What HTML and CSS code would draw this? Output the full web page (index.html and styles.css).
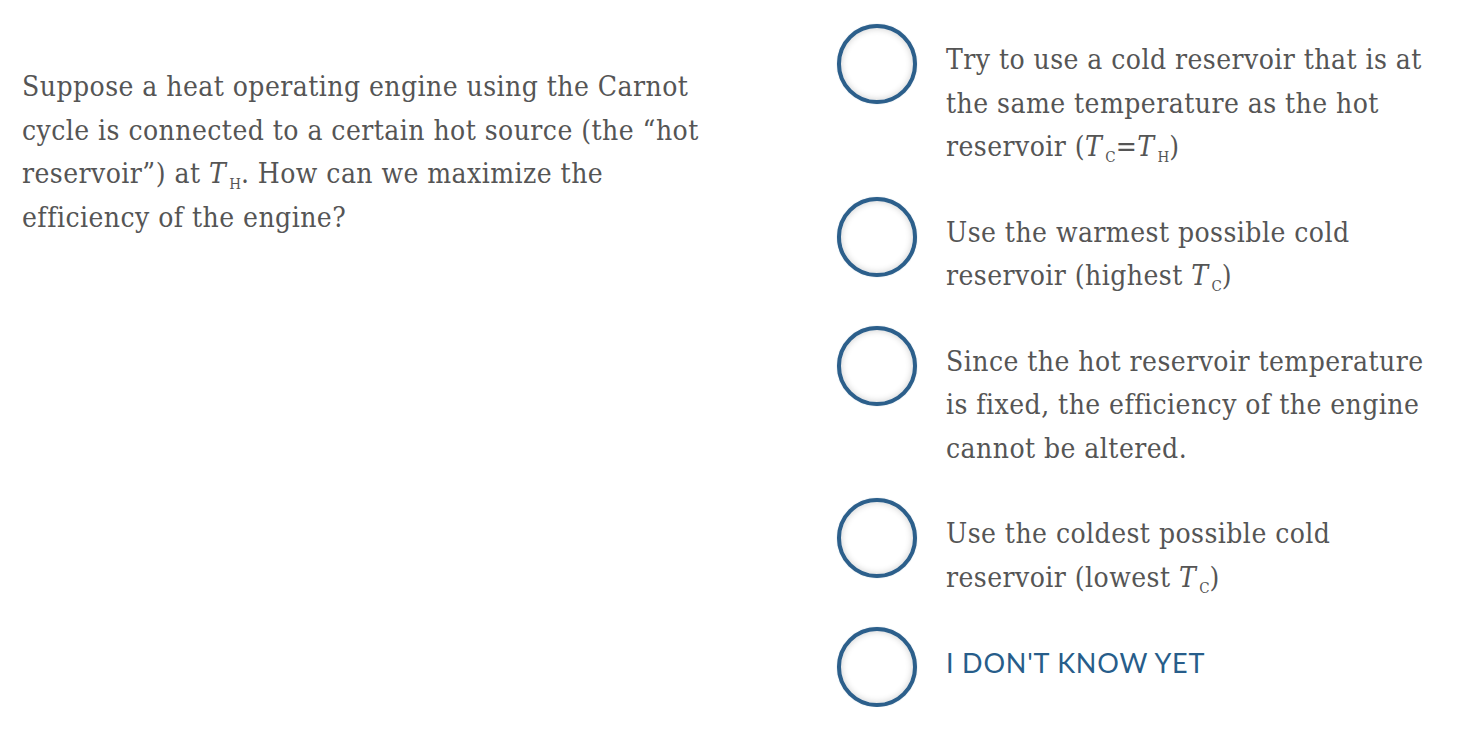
FILE: index.html
```html
<!DOCTYPE html>
<html lang="en">
<head>
<meta charset="utf-8">
<title>Carnot question</title>
<link rel="stylesheet" href="styles.css">
</head>
<body>
<main class="page">
  <section class="question">
    <p class="question-text">Suppose a heat operating engine using the Carnot cycle is connected to a certain hot source (the “hot reservoir”) at <i>T</i><sub>H</sub>. How can we maximize the efficiency of the engine?</p>
  </section>
  <ul class="options">
    <li class="option">
      <span class="radio"></span>
      <span class="label">Try to use a cold reservoir that is at the same temperature as the hot reservoir (<i>T</i><sub>C</sub>=<i>T</i><sub>H</sub>)</span>
    </li>
    <li class="option">
      <span class="radio"></span>
      <span class="label">Use the warmest possible cold reservoir (highest <i>T</i><sub>C</sub>)</span>
    </li>
    <li class="option">
      <span class="radio"></span>
      <span class="label">Since the hot reservoir temperature is fixed, the efficiency of the engine cannot be altered.</span>
    </li>
    <li class="option">
      <span class="radio"></span>
      <span class="label">Use the coldest possible cold reservoir (lowest <i>T</i><sub>C</sub>)</span>
    </li>
    <li class="option">
      <span class="radio"></span>
      <span class="label label-dontknow">I DON'T KNOW YET</span>
    </li>
  </ul>
</main>
</body>
</html>
```
FILE: styles.css
```css
html, body {
  margin: 0;
  padding: 0;
  background: #ffffff;
}

.page {
  display: flex;
  align-items: flex-start;
  font-family: "DejaVu Serif Condensed", "DejaVu Serif", serif;
  color: #555555;
  font-size: 28px;
  letter-spacing: 0.45px;
  line-height: 43.5px;
}

.question {
  flex: 0 0 837px;
  box-sizing: border-box;
  padding: 65px 0 0 22px;
}

.question-text {
  margin: 0;
  max-width: 705px;
}

.options {
  list-style: none;
  margin: 0;
  padding: 24px 0 0 0;
  display: flex;
  flex-direction: column;
  gap: 28px;
}

.option {
  display: flex;
  align-items: flex-start;
}

.radio {
  flex: 0 0 auto;
  width: 80px;
  height: 80px;
  box-sizing: border-box;
  border: 4px solid #2c5f8b;
  border-radius: 50%;
  background: #ffffff;
  box-shadow: inset 0 0 7px rgba(0, 0, 0, 0.2), 0 0 1px rgba(44, 95, 139, 0.6);
  margin-right: 29px;
}

.label {
  width: 495px;
  padding-top: 14px;
}

.label-dontknow {
  font-family: Lato, "Open Sans", sans-serif;
  color: #275d8a;
  font-size: 27px;
  letter-spacing: 0.8px;
}

i {
  font-style: italic;
  padding-right: 3px;
}

sub {
  font-size: 15px;
  line-height: 0;
  vertical-align: -6px;
  letter-spacing: 0;
}
```
